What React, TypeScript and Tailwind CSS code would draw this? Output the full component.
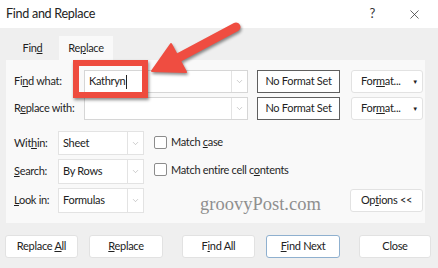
import { X, ChevronDown } from "lucide-react";

type ComboProps = { value?: string; className?: string; children?: React.ReactNode };

function Combo({ value, className = "", children }: ComboProps) {
  return (
    <div className={`flex h-[23px] shrink-0 items-stretch border border-[#d6d6d6] bg-white ${className}`}>
      <div className="flex flex-1 items-center whitespace-nowrap pl-[4px] text-[#222]">
        {value}
        {children}
      </div>
      <div className="flex w-[16px] items-center justify-center border-l border-[#e3e3e3]">
        <ChevronDown size={9} strokeWidth={1.3} className="text-[#9a9a9a]" />
      </div>
    </div>
  );
}

function Btn({ children, className = "" }: { children: React.ReactNode; className?: string }) {
  return (
    <div
      className={`flex h-[23px] shrink-0 items-center justify-center whitespace-pre rounded-[3px] border border-[#e2e2e2] bg-white text-[#222] ${className}`}
    >
      {children}
    </div>
  );
}

function FormatBtn() {
  return (
    <Btn className="ml-[11px] w-[72px] !justify-between pl-[9px] pr-[4px]">
      <span>
        For<u>m</u>at...
      </span>
      <span className="text-[6px]">▼</span>
    </Btn>
  );
}

export default function App() {
  return (
    <div
      className="relative h-[268px] w-[438px] overflow-hidden whitespace-nowrap bg-[#efefef] text-[11px] tracking-[-0.3px] text-[#1f1f1f]"
      style={{ fontFamily: 'Lato, "Noto Sans", sans-serif' }}
    >
      {/* Title bar */}
      <div className="flex h-[28px] items-center bg-white pl-[6px]">
        <span className="text-[12.6px] text-[#222]">Find and Replace</span>
        <span className="ml-auto mr-[32px] text-[13px] text-[#333]">?</span>
        <X size={15} strokeWidth={1.2} className="mr-[16px] text-[#333]" />
      </div>

      {/* Tabs */}
      <div className="mt-[8px] flex h-[24px] pl-[6px]">
        <div className="flex w-[53px] items-center justify-center">
          <span>
            Fin<u>d</u>
          </span>
        </div>
        <div className="flex w-[54px] items-center justify-center bg-[#f9f9f9]">
          <span>
            Re<u>p</u>lace
          </span>
        </div>
      </div>

      {/* Panel */}
      <div className="mx-[6px] h-[163px] w-[419px] bg-[#f9f9f9] pl-[8px] pt-[10px]">
        <div className="flex h-[23px] items-center">
          <span className="w-[70px] shrink-0">
            Fi<u>n</u>d what:
          </span>
          <Combo className="w-[164px]">
            <span>Kathryn</span>
            <span className="ml-[1px] inline-block h-[14px] w-px bg-[#222]" />
          </Combo>
          <div className="ml-[9px] flex h-[23px] w-[83px] shrink-0 items-center justify-center border border-[#5f5f5f] bg-white">
            No Format Set
          </div>
          <FormatBtn />
        </div>
        <div className="mt-[4px] flex h-[23px] items-center">
          <span className="w-[70px] shrink-0">
            R<u>e</u>place with:
          </span>
          <Combo className="w-[164px]" />
          <div className="ml-[9px] flex h-[23px] w-[83px] shrink-0 items-center justify-center border border-[#5f5f5f] bg-white">
            No Format Set
          </div>
          <FormatBtn />
        </div>

        <div className="mt-[11px] flex">
          <div className="flex flex-col gap-[4px]">
            <div className="flex items-center">
              <span className="w-[44px] shrink-0">
                Wit<u>h</u>in:
              </span>
              <Combo value="Sheet" className="!h-[24px] w-[86px] !border-[#e3e3e3]" />
            </div>
            <div className="flex items-center">
              <span className="w-[44px] shrink-0">
                <u>S</u>earch:
              </span>
              <Combo value="By Rows" className="!h-[25px] w-[86px] !border-[#e3e3e3]" />
            </div>
            <div className="flex items-center">
              <span className="w-[44px] shrink-0">
                <u>L</u>ook in:
              </span>
              <Combo value="Formulas" className="!h-[25px] w-[86px] !border-[#e3e3e3]" />
            </div>
          </div>

          <div className="ml-[10px] flex flex-col gap-[11px] pt-[3px]">
            <div className="flex items-center gap-[4px]">
              <span className="h-[13px] w-[13px] shrink-0 rounded-[2px] border border-[#8c8c8c] bg-white" />
              <span>
                Match <u>c</u>ase
              </span>
            </div>
            <div className="flex items-center gap-[4px]">
              <span className="h-[13px] w-[13px] shrink-0 rounded-[2px] border border-[#8c8c8c] bg-white" />
              <span>
                Match entire cell c<u>o</u>ntents
              </span>
            </div>
          </div>

          <div className="ml-auto mr-[2px] flex flex-col justify-end pb-[1px]">
            <Btn className="w-[73px]">
              <span>
                Op<u>t</u>ions &lt;&lt;
              </span>
            </Btn>
          </div>
        </div>
      </div>

      {/* Bottom buttons */}
      <div className="mt-[12px] flex pl-[5px]">
        <Btn className="w-[73px]">
          <span>
            Replace <u>A</u>ll
          </span>
        </Btn>
        <Btn className="ml-[11px] w-[74px]">
          <span>
            <u>R</u>eplace
          </span>
        </Btn>
        <Btn className="ml-[19px] w-[73px]">
          <span>
            F<u>i</u>nd All
          </span>
        </Btn>
        <Btn className="ml-[11px] w-[74px] !border-[#8fb0cf]">
          <span>
            <u>F</u>ind Next
          </span>
        </Btn>
        <Btn className="ml-[19px] w-[72px]">Close</Btn>
      </div>

      {/* Watermark */}
      <div
        className="absolute left-[200px] top-[195px] text-[18.5px] leading-none tracking-normal text-[#8f8f8f]"
        style={{ fontFamily: '"Liberation Serif", serif' }}
      >
        groovyPost.com
      </div>

      {/* Red highlight box */}
      <div className="absolute left-[73px] top-[60px] h-[38px] w-[75px] border-[6px] border-[#ee4b3e] shadow-[1px_2px_3px_rgba(0,0,0,0.45)]" />

      {/* Arrow */}
      <svg
        className="absolute left-0 top-0"
        width="438"
        height="268"
        viewBox="0 0 438 268"
        style={{ filter: "drop-shadow(1px 2px 1.5px rgba(0,0,0,0.45))" }}
      >
        <line x1="236" y1="27" x2="176" y2="59" stroke="#ef4d41" strokeWidth="9" strokeLinecap="round" />
        <polygon points="152,71 171,44 186,72" fill="#ef4d41" strokeLinejoin="round" stroke="#ef4d41" strokeWidth="2" />
      </svg>
    </div>
  );
}
